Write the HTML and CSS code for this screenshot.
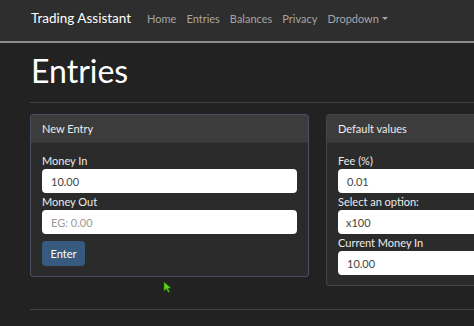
FILE: index.html
```html
<!DOCTYPE html>
<html lang="en">
<head>
  <meta charset="UTF-8">
  <title>Trading Assistant - Entries</title>
  <link rel="stylesheet" href="styles.css">
</head>
<body>

  <!-- top navigation -->
  <nav class="navbar">
    <div class="nav-inner">
      <a class="brand" href="#">Trading Assistant</a>
      <ul class="nav-links">
        <li><a href="#">Home</a></li>
        <li><a href="#">Entries</a></li>
        <li><a href="#">Balances</a></li>
        <li><a href="#">Privacy</a></li>
        <li><a href="#" class="dropdown-toggle">Dropdown</a></li>
      </ul>
    </div>
  </nav>

  <div class="container">
    <h1>Entries</h1>
    <hr>

    <div class="card-row">
      <div class="card card-entry">
        <div class="card-header">New Entry</div>
        <div class="card-body">
          <label for="moneyIn">Money In</label>
          <input type="text" id="moneyIn" value="10.00">
          <label for="moneyOut">Money Out</label>
          <input type="text" id="moneyOut" placeholder="EG: 0.00">
          <button class="btn-primary">Enter</button>
        </div>
      </div>

      <div class="card">
        <div class="card-header">Default values</div>
        <div class="card-body">
          <label for="fee">Fee (%)</label>
          <input type="text" id="fee" value="0.01">
          <label for="multiplier">Select an option:</label>
          <select id="multiplier">
            <option>x100</option>
            <option>x10</option>
            <option>x1</option>
          </select>
          <label for="currentIn">Current Money In</label>
          <input type="text" id="currentIn" value="10.00">
        </div>
      </div>
    </div>

    <hr class="bottom-rule">
  </div>

  <!-- mouse pointer seen in the capture -->
  <svg class="pointer" width="9" height="12" viewBox="0 0 9 12">
    <path d="M1 1 L1 10 L3.4 7.8 L5.2 11.4 L6.6 10.7 L4.9 7.2 L8 7.1 Z" fill="#5fd31c" stroke="#2f6d0a" stroke-width="0.6"/>
  </svg>

</body>
</html>
```

FILE: styles.css
```css
html, body {
  overflow: hidden;
}

body {
  margin: 0;
  background: #222222;
  color: #e6e6e6;
  font-family: Lato, "Open Sans", sans-serif;
  font-size: 11px;
}

/* === navbar === */
.navbar {
  background: #2e2e2e;
  border-bottom: 2px solid #8c8c8c;
  height: 41px;
}

.nav-inner {
  display: flex;
  align-items: center;
  height: 100%;
  box-sizing: border-box;
  padding: 0 0 5px 31px;
}

.brand {
  color: #ffffff;
  font-size: 13.5px;
  text-decoration: none;
  margin-right: 11px;
  white-space: nowrap;
}

.nav-links {
  display: flex;
  list-style: none;
  margin: 0;
  padding: 0;
}

.nav-links a {
  display: block;
  padding: 0 5px;
  color: #a5a5a5;
  font-size: 11px;
  text-decoration: none;
  white-space: nowrap;
}

.dropdown-toggle::after {
  content: '';
  display: inline-block;
  margin-left: 3px;
  vertical-align: 3px;
  border-top: 3px solid #a5a5a5;
  border-left: 3px solid transparent;
  border-right: 3px solid transparent;
}

/* === page === */
.container {
  width: 575px;
  padding-left: 30px;
}

h1 {
  font-size: 32px;
  font-weight: 400;
  line-height: 1.2;
  color: #ffffff;
  margin: 9px 0 12px 1px;
}

hr {
  border: 0;
  border-top: 1px solid #424242;
  margin: 0 0 11px;
}

.bottom-rule {
  margin-top: 23px;
}

.card-row {
  display: flex;
  align-items: flex-start;
  gap: 17px;
}

.card {
  width: 279px;
  box-sizing: border-box;
  background: #2b2b2b;
  border: 1px solid #42474e;
  border-radius: 3px;
}

.card-entry {
  border-color: #485163;
}

.card-header {
  background: #3c3c3c;
  height: 27px;
  line-height: 27px;
  padding: 0 11px;
  color: #ececec;
  font-size: 11px;
  border-bottom: 1px solid #353535;
}

.card-body {
  padding: 9px 11px 10px;
  display: flex;
  flex-direction: column;
}

.card-body label {
  line-height: 17px;
  font-size: 11px;
  color: #ececec;
}

.card-body input,
.card-body select {
  height: 24px;
  box-sizing: border-box;
  border: 0;
  border-radius: 4px;
  background: #ffffff;
  color: #444444;
  padding: 0 9px;
  font-family: Lato, "Open Sans", sans-serif;
  font-size: 11px;
  width: 100%;
}

.card-body select {
  appearance: none;
  -webkit-appearance: none;
  padding-left: 8px;
}

.card-body input::placeholder {
  color: #9a9a9a;
}

.btn-primary {
  align-self: flex-start;
  margin-top: 7px;
  background: #375a7f;
  color: #ffffff;
  border: 0;
  border-radius: 4px;
  height: 25px;
  width: 43px;
  padding: 0;
  font-family: Lato, "Open Sans", sans-serif;
  font-size: 11px;
}

.pointer {
  position: absolute;
  left: 163px;
  top: 281px;
}
```
